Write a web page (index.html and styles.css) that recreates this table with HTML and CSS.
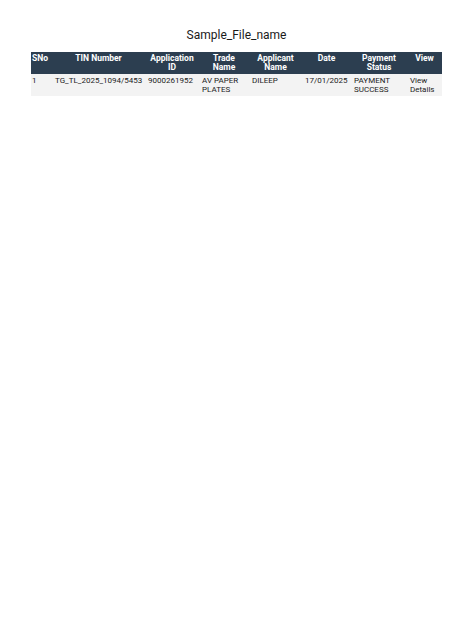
FILE: index.html
```html
<!DOCTYPE html>
<html>
<head>
<meta charset="utf-8">
<link rel="stylesheet" href="styles.css">
</head>
<body>
<div class="page">
  <h1 class="title">Sample_File_name</h1>
  <table class="grid">
    <colgroup>
      <col class="c-sno"><col class="c-tin"><col class="c-app"><col class="c-trade"><col class="c-name"><col class="c-date"><col class="c-pay"><col class="c-view">
    </colgroup>
    <thead>
      <tr>
        <th class="sno">SNo</th>
        <th>TIN Number</th>
        <th>Application ID</th>
        <th>Trade Name</th>
        <th>Applicant Name</th>
        <th>Date</th>
        <th>Payment Status</th>
        <th>View</th>
      </tr>
    </thead>
    <tbody>
      <tr>
        <td class="sno">1</td>
        <td>TG_TL_2025_1094/5453</td>
        <td>9000261952</td>
        <td>AV PAPER PLATES</td>
        <td>DILEEP</td>
        <td>17/01/2025</td>
        <td>PAYMENT SUCCESS</td>
        <td>View Details</td>
      </tr>
    </tbody>
  </table>
</div>
</body>
</html>
```
FILE: styles.css
```css
html, body {
  margin: 0;
  padding: 0;
  background: #ffffff;
}
body {
  font-family: Roboto, "Liberation Sans", sans-serif;
  color: #222222;
}
.page {
  padding: 27px 32px 0 31px;
}
.title {
  margin: 0 0 9px 0;
  font-size: 12px;
  font-weight: 400;
  text-align: center;
  line-height: 16px;
  color: #1a1a1a;
}
.grid {
  width: 411px;
  border-collapse: collapse;
  table-layout: fixed;
  font-size: 8px;
  line-height: 9px;
}
.c-sno { width: 21px; }
.c-tin { width: 93px; }
.c-app { width: 54px; }
.c-trade { width: 50px; }
.c-name { width: 53px; }
.c-date { width: 49px; }
.c-pay { width: 56px; }
.c-view { width: 35px; }
.grid th {
  background: #2c3e50;
  color: #ffffff;
  font-weight: 700;
  font-size: 8.5px;
  text-align: center;
  vertical-align: top;
  padding: 2px 3px 2px 3px;
  height: 17px;
}
.grid th.sno {
  text-align: left;
  padding-left: 1px;
}
.grid td {
  background: #f3f3f3;
  color: #222222;
  text-align: left;
  vertical-align: top;
  padding: 2px 3px 2px 3px;
  height: 17px;
}
.grid td.sno {
  padding-left: 1px;
}
```
